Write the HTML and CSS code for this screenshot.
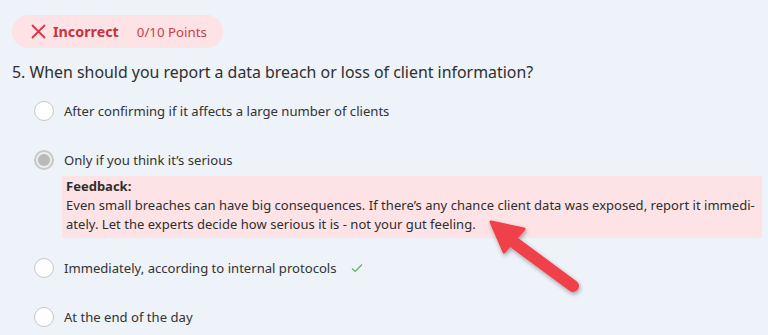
FILE: index.html
```html
<!DOCTYPE html>
<html>
<head>
<meta charset="utf-8">
<link rel="stylesheet" href="styles.css">
</head>
<body>
<div class="page">
  <div class="badge">
    <svg class="badge-x" width="15" height="15" viewBox="0 0 15 15"><path d="M1.5 1.5 L13.5 13.5 M13.5 1.5 L1.5 13.5" stroke="#d23a48" stroke-width="1.8" stroke-linecap="round" fill="none"/></svg>
    <span class="badge-title">Incorrect</span>
    <span class="badge-points">0/10 Points</span>
  </div>
  <div class="question">5. When should you report a data breach or loss of client information?</div>
  <div class="options">
    <div class="option">
      <span class="radio"></span>
      <span class="opt-text">After confirming if it affects a large number of clients</span>
    </div>
    <div class="option selected">
      <span class="radio"><span class="dot"></span></span>
      <span class="opt-text">Only if you think it’s serious</span>
    </div>
    <div class="feedback">
      <div class="fb-title">Feedback:</div>
      <div class="fb-text">Even small breaches can have big consequences. If there’s any chance client data was exposed, report it immedi-<br>ately. Let the experts decide how serious it is - not your gut feeling.</div>
    </div>
    <div class="option">
      <span class="radio"></span>
      <span class="opt-text">Immediately, according to internal protocols</span>
      <svg class="check" width="12" height="10" viewBox="0 0 12 10"><path d="M1 5.5 L4.2 8.5 L11 1.5" stroke="#5cb85c" stroke-width="1.2" fill="none"/></svg>
    </div>
    <div class="option last">
      <span class="radio"></span>
      <span class="opt-text">At the end of the day</span>
    </div>
  </div>
</div>
<svg class="arrow" width="768" height="335" viewBox="0 0 768 335">
  <defs>
    <filter id="sh" x="-20%" y="-20%" width="140%" height="140%">
      <feDropShadow dx="1" dy="2" stdDeviation="2" flood-color="#000" flood-opacity="0.35"/>
    </filter>
  </defs>
  <g filter="url(#sh)">
    <line x1="573" y1="286" x2="508" y2="238" stroke="#f0404a" stroke-width="12" stroke-linecap="round"/>
    <path d="M491 222 L524 229 L504 252 Z" fill="#f0404a" stroke="#f0404a" stroke-width="3" stroke-linejoin="round"/>
  </g>
</svg>
</body>
</html>
```
FILE: styles.css
```css
html, body {
  margin: 0;
  padding: 0;
  background: #eef2f9;
  width: 768px;
  height: 335px;
  overflow: hidden;
  font-family: "Noto Sans", "Open Sans", sans-serif;
  color: #333;
}
.page {
  padding: 15px 0 0 12px;
}
.badge {
  display: inline-flex;
  align-items: center;
  height: 33px;
  padding: 0 16px 0 19px;
  border-radius: 17px;
  background: #fde2e6;
  box-sizing: border-box;
}
.badge-x {
  margin-right: 7px;
}
.badge-title {
  font-weight: 700;
  font-size: 14.3px;
  color: #c8323f;
  margin-right: 18px;
}
.badge-points {
  font-size: 13.3px;
  color: #c8404c;
}
.question {
  margin-top: 12px;
  font-size: 15.9px;
  color: #2f2f2f;
  line-height: 24px;
}
.options {
  padding-left: 22px;
  margin-top: 16px;
}
.option {
  display: flex;
  align-items: center;
  height: 22px;
  margin-bottom: 27px;
  font-size: 13.1px;
  color: #333;
}
.option.selected {
  margin-bottom: 5px;
}
.option.last {
  margin-bottom: 0;
}
.radio {
  width: 18px;
  height: 18px;
  border: 1px solid #c6c6c6;
  border-radius: 50%;
  background: #fff;
  margin-right: 10px;
  display: flex;
  align-items: center;
  justify-content: center;
  flex: none;
}
.selected .radio {
  background: #ececec;
  border: 2px solid #c8c8c8;
  width: 16px;
  height: 16px;
}
.dot {
  width: 12px;
  height: 12px;
  border-radius: 50%;
  background: #b9b9b9;
}
.check {
  margin-left: 14px;
}
.feedback {
  margin-left: 28px;
  margin-bottom: 19px;
  width: 700px;
  background: #fde3e6;
  padding: 1px 4px 4px 4px;
  box-sizing: border-box;
  font-size: 13px;
  line-height: 19px;
  color: #2e2e2e;
}
.fb-title {
  font-weight: 700;
}
.fb-text {
  letter-spacing: 0.03px;
}
.arrow {
  position: absolute;
  left: 0;
  top: 0;
  pointer-events: none;
}
```
